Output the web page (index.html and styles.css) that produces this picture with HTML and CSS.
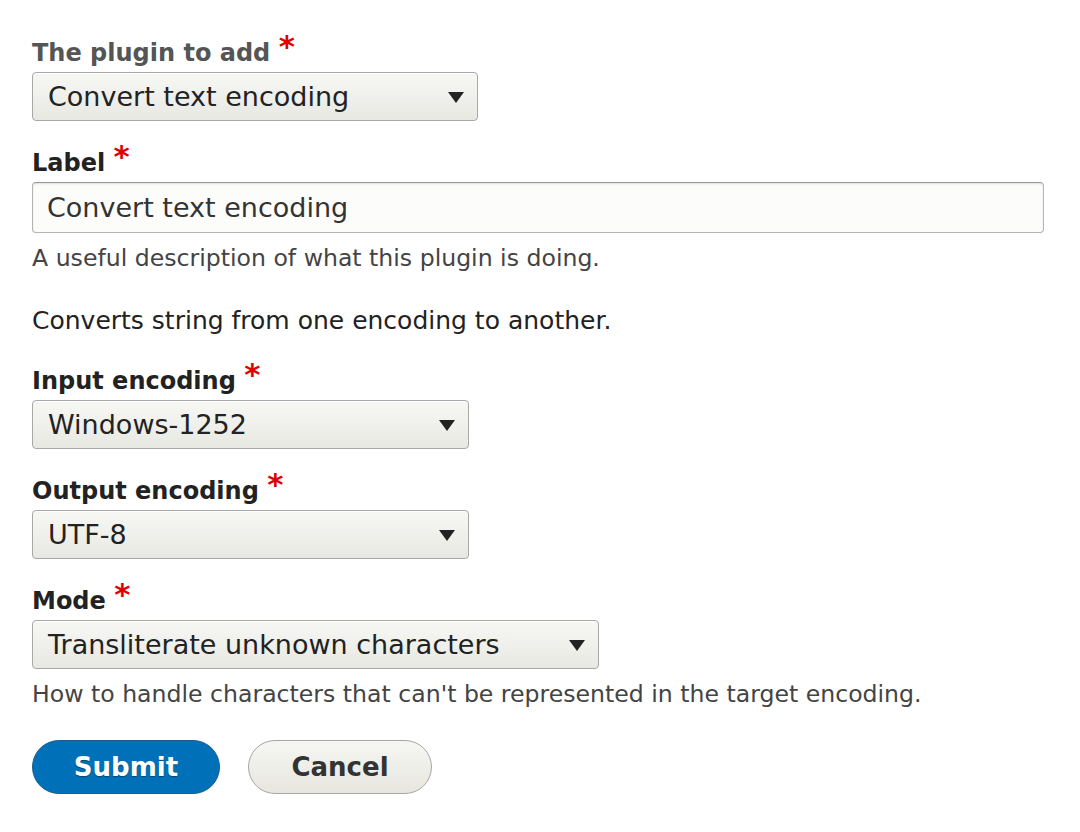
FILE: index.html
```html
<!DOCTYPE html>
<html lang="en">
<head>
<meta charset="utf-8">
<title>Add plugin</title>
<link rel="stylesheet" href="styles.css">
</head>
<body>
<form class="form">
  <div class="item item-first">
    <label class="label label-muted">The plugin to add <span class="req">*</span></label>
    <div class="select select-w1">
      <span class="select-text">Convert text encoding</span>
      <span class="arrow"></span>
    </div>
  </div>

  <div class="item">
    <label class="label">Label <span class="req">*</span></label>
    <div class="textinput">Convert text encoding</div>
    <div class="desc">A useful description of what this plugin is doing.</div>
  </div>

  <p class="intro">Converts string from one encoding to another.</p>

  <div class="item">
    <label class="label">Input encoding <span class="req">*</span></label>
    <div class="select select-w2">
      <span class="select-text">Windows-1252</span>
      <span class="arrow"></span>
    </div>
  </div>

  <div class="item">
    <label class="label">Output encoding <span class="req">*</span></label>
    <div class="select select-w2">
      <span class="select-text">UTF-8</span>
      <span class="arrow"></span>
    </div>
  </div>

  <div class="item">
    <label class="label">Mode <span class="req">*</span></label>
    <div class="select select-w3">
      <span class="select-text">Transliterate unknown characters</span>
      <span class="arrow"></span>
    </div>
    <div class="desc">How to handle characters that can't be represented in the target encoding.</div>
  </div>

  <div class="actions">
    <button type="button" class="btn btn-primary">Submit</button>
    <button type="button" class="btn btn-secondary">Cancel</button>
  </div>
</form>
</body>
</html>
```

FILE: styles.css
```css
html, body {
  margin: 0;
  padding: 0;
  background: #ffffff;
}

body {
  font-family: "DejaVu Sans", "Liberation Sans", sans-serif;
  color: #333333;
}

.form {
  padding: 37px 0 0 32px;
  width: 1012px;
}

.item {
  margin-top: 26px;
}

.item-first {
  margin-top: 0;
}

.label {
  display: block;
  font-size: 24px;
  line-height: 32px;
  font-weight: bold;
  color: #222222;
  margin-bottom: 3px;
}

.label-muted {
  color: #555555;
}

.req {
  color: #e00000;
  font-size: 31px;
  line-height: 0;
  vertical-align: 4px;
}

.select {
  box-sizing: border-box;
  height: 49px;
  display: flex;
  align-items: center;
  justify-content: space-between;
  padding: 0 13px 0 15px;
  border: 1px solid #a8a8a8;
  border-radius: 4px;
  background: linear-gradient(#f7f7f4, #e8e8e3);
  box-shadow: inset 0 1px 0 #ffffff;
  font-size: 27px;
  color: #222222;
}

.select-w1 { width: 446px; }
.select-w2 { width: 437px; }
.select-w3 { width: 567px; }

.arrow {
  width: 0;
  height: 0;
  border-left: 8px solid transparent;
  border-right: 8px solid transparent;
  border-top: 11px solid #222222;
  margin-top: 2px;
}

.textinput {
  box-sizing: border-box;
  height: 51px;
  width: 1012px;
  display: flex;
  align-items: center;
  padding: 0 14px;
  border: 1px solid #b4b4b4;
  border-top-color: #999999;
  border-radius: 4px;
  background: #fcfcfa;
  box-shadow: inset 0 1px 2px rgba(0, 0, 0, 0.12);
  font-size: 27px;
  color: #333333;
}

.desc {
  font-size: 23.6px;
  line-height: 30px;
  color: #444444;
  margin-top: 10px;
}

.intro {
  font-size: 25px;
  line-height: 30px;
  color: #222222;
  margin: 33px 0 0;
}

.intro + .item {
  margin-top: 29px;
}

.actions {
  display: flex;
  gap: 28px;
  margin-top: 31px;
}

.btn {
  box-sizing: border-box;
  height: 54px;
  padding: 0;
  border: 1px solid #a6a6a6;
  border-radius: 27px;
  background: linear-gradient(#f6f6f3, #e7e7df);
  font-family: "DejaVu Sans", "Liberation Sans", sans-serif;
  font-size: 26px;
  font-weight: bold;
  color: #333333;
}

.btn-primary {
  width: 188px;
  background: #0071b8;
  border-color: #1e5c90;
  color: #ffffff;
  text-shadow: 0 1px 1px rgba(0, 0, 0, 0.4);
}

.btn-secondary {
  width: 184px;
}
```
